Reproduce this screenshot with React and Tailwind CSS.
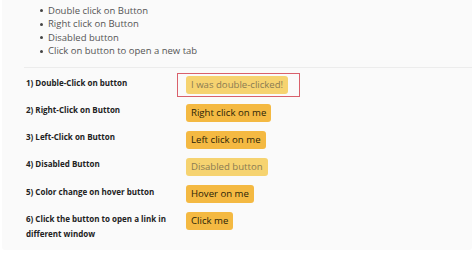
import React from "react";

// 버튼 예제 목록
const notes = [
  "Double click on Button",
  "Right click on Button",
  "Disabled button",
  "Click on button to open a new tab",
];

const rows = [
  { label: "1) Double-Click on button", text: "I was double-clicked!", faded: true, marked: true },
  { label: "2) Right-Click on Button", text: "Right click on me" },
  { label: "3) Left-Click on Button", text: "Left click on me" },
  { label: "4) Disabled Button", text: "Disabled button", faded: true },
  { label: "5) Color change on hover button", text: "Hover on me" },
  { label: "6) Click the button to open a link in different window", text: "Click me" },
];

const App = () => {
  return (
    <div
      className="w-[474px] h-[253px] bg-white overflow-hidden"
      style={{ fontFamily: "'Open Sans', 'Noto Sans', sans-serif" }}
    >
      <div className="mx-[2px] h-[250px] bg-[#fafafa] rounded-b-[3px]">
        {/* 안내 목록 */}
        <ul className="pt-[4px] pl-[38px]">
          {notes.map((note) => (
            <li key={note} className="flex items-center h-[13.6px] text-[9.5px] text-[#555]">
              <span className="w-[3px] h-[3px] rounded-full bg-[#444] mr-[5px]" />
              {note}
            </li>
          ))}
        </ul>

        <div className="mt-[8.5px] ml-[22px] border-t border-[#ececec]" />

        {/* 버튼 행 */}
        <div className="pt-[8.5px] pl-[24px]">
          {rows.map((row) => (
            <div key={row.label} className="flex items-start mb-[9.2px]">
              <div className="w-[160px] pr-[4px] text-[8px] leading-[15px] font-bold text-[#222] -mt-[1.5px]">
                {row.label}
              </div>
              <div className="relative flex">
                {row.marked && (
                  <span className="absolute -left-[9px] -right-[12px] -top-[3px] -bottom-[3px] border border-[#d9606b]" />
                )}
                <button
                  className={
                    row.faded
                      ? "h-[18px] px-[5px] rounded-[3px] text-[9.6px] leading-[18px] bg-[#f6d370] text-[#8a7b52]"
                      : "h-[18px] px-[5px] rounded-[3px] text-[9.6px] leading-[18px] bg-[#f4b942] text-[#2a1f08]"
                  }
                >
                  {row.text}
                </button>
              </div>
            </div>
          ))}
        </div>
      </div>
    </div>
  );
};

export default App;
